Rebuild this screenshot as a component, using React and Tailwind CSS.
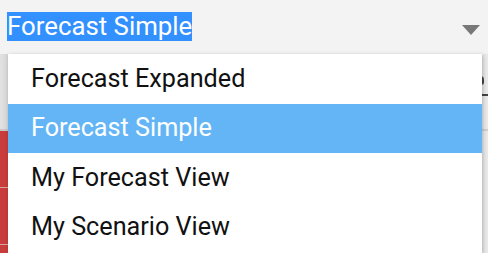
export default function App() {
  const items = ["Forecast Expanded", "Forecast Simple", "My Forecast View", "My Scenario View"];
  return (
    <div className="relative w-[488px] h-[253px] overflow-hidden bg-[#f3f3f3]" style={{ fontFamily: "Roboto, 'Liberation Sans', sans-serif" }}>
      {/* top select */}
      <div className="flex items-center h-[54px] pl-[7px] pr-[7px]">
        <span className="mt-[-2px] bg-[#3390ff] text-white text-[25.8px] leading-[29px] whitespace-nowrap">Forecast Simple</span>
        <div className="ml-auto mt-[6px] mr-[1px] w-0 h-0 border-l-[9px] border-r-[9px] border-t-[10px] border-l-transparent border-r-transparent border-t-[#787878]" />
      </div>
      {/* background behind list */}
      <div className="flex h-[199px]">
        <div className="w-[8px] flex flex-col">
          <div className="h-[77px] bg-gradient-to-r from-[#e2e2e2] to-[#d6d6d6] border-b-2 border-[#c8c8c8]" />
          <div className="flex-1 bg-[#c83c3c] flex flex-col">
            <div className="h-[57px] border-b border-[#e0a0a0]" />
            <div className="h-[57px] border-b border-[#e0a0a0]" />
          </div>
        </div>
        <div className="w-[474px] bg-white shadow-[1px_1px_4px_rgba(0,0,0,0.25)] relative z-10">
          {items.map((t, i) => (
            <div
              key={t}
              className={
                "h-[49.5px] flex items-center pl-[23px] text-[25.2px] whitespace-nowrap " +
                (i === 1 ? "bg-[#64b5f6] text-white" : "text-[#111]")
              }
            >
              {t}
            </div>
          ))}
        </div>
        <div className="flex-1 bg-[#e9e9e9] flex flex-col">
          <div className="h-[42px] border-b-2 border-[#444] relative overflow-hidden">
            <div className="absolute left-[-6px] top-[22px] w-[8px] h-[10px] rounded-full border-2 border-[#444] border-l-transparent border-b-transparent" />
          </div>
          <div className="h-[35px] border-b-2 border-[#d0d0d0]" />
        </div>
      </div>
    </div>
  );
}
